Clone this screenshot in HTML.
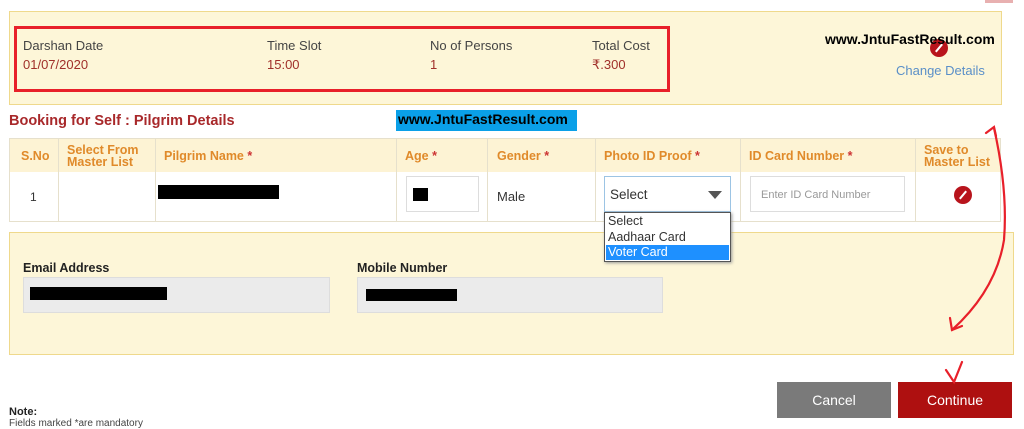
<!DOCTYPE html><html><head><style>
body{margin:0;width:1024px;height:422px;overflow:hidden;background:#fff;font-family:"Liberation Sans",sans-serif;position:relative}
div,span{position:absolute;box-sizing:border-box}
.lb{font-size:13px;color:#444}
.vl{font-size:13px;color:#a0302a}
.th{font-size:12.5px;color:#e08a2a;font-weight:bold;line-height:12px}
.th b{color:#c33}
.col{top:138px;height:84px;border-left:1px solid #e6e0cc}
.edit{width:18px;height:18px;border-radius:50%;background:#b8141c}
.edit:after{content:"";position:absolute;left:8px;top:4px;width:2px;height:10px;background:#fff;transform:rotate(40deg)}
</style></head><body>
<div style="left:985px;top:0;width:28px;height:3px;background:#e8b0b0"></div>
<div style="left:9px;top:11px;width:993px;height:94px;background:#fdf6d8;border:1px solid #efd98c"></div>
<div style="left:14px;top:26px;width:656px;height:66px;border:3px solid #e8202a"></div>
<div class="lb" style="left:23px;top:38px">Darshan Date</div><div class="vl" style="left:23px;top:57px">01/07/2020</div>
<div class="lb" style="left:267px;top:38px">Time Slot</div><div class="vl" style="left:267px;top:57px">15:00</div>
<div class="lb" style="left:430px;top:38px">No of Persons</div><div class="vl" style="left:430px;top:57px">1</div>
<div class="lb" style="left:592px;top:38px">Total Cost</div><div class="vl" style="left:592px;top:57px">₹.300</div>
<div class="edit" style="left:930px;top:39px"></div>
<div style="left:825px;top:31px;font-size:14px;font-weight:bold;color:#000">www.JntuFastResult.com</div>
<div style="left:896px;top:63px;font-size:13px;color:#5a8fc8">Change Details</div>
<div style="left:9px;top:113px;font-size:14.5px;font-weight:bold;color:#a8282a">Booking for Self : Pilgrim Details</div>
<div style="left:396px;top:110px;width:181px;height:21px;background:#0aa0e8;font-size:14px;font-weight:bold;padding:1px 0 0 2px">www.JntuFastResult.com</div>
<div style="left:9px;top:138px;width:992px;height:84px;border:1px solid #e6e0cc"></div>
<div style="left:10px;top:139px;width:990px;height:33px;background:#fdf3d4"></div>
<div class="col" style="left:58px"></div><div class="col" style="left:155px"></div><div class="col" style="left:396px"></div><div class="col" style="left:487px"></div><div class="col" style="left:595px"></div><div class="col" style="left:740px"></div><div class="col" style="left:915px"></div>
<div class="th" style="left:21px;top:150px">S.No</div>
<div class="th" style="left:67px;top:144px">Select From<br>Master List</div>
<div class="th" style="left:164px;top:150px">Pilgrim Name <b>*</b></div>
<div class="th" style="left:405px;top:150px">Age <b>*</b></div>
<div class="th" style="left:497px;top:150px">Gender <b>*</b></div>
<div class="th" style="left:604px;top:150px">Photo ID Proof <b>*</b></div>
<div class="th" style="left:749px;top:150px">ID Card Number <b>*</b></div>
<div class="th" style="left:924px;top:144px">Save to<br>Master List</div>
<div style="left:30px;top:190px;font-size:12px;color:#333">1</div>
<div style="left:158px;top:185px;width:121px;height:14px;background:#000"></div>
<div style="left:406px;top:176px;width:73px;height:36px;border:1px solid #ddd;background:#fff"></div>
<div style="left:413px;top:188px;width:15px;height:13px;background:#000"></div>
<div style="left:497px;top:189px;font-size:13px;color:#333">Male</div>
<div style="left:604px;top:176px;width:127px;height:36px;border:1px solid #9cc4e4;background:#fff;font-size:13.5px;color:#333;padding:10px 0 0 5px">Select<span style="right:8px;top:14px;border:7px solid transparent;border-top:8px solid #555;border-bottom:0"></span></div>
<div style="left:750px;top:176px;width:155px;height:36px;border:1px solid #ddd;background:#fff;font-size:11px;color:#999;padding:12px 0 0 10px">Enter ID Card Number</div>
<div class="edit" style="left:954px;top:186px"></div>
<div style="left:9px;top:232px;width:1005px;height:123px;background:#fdf6d8;border:1px solid #efd98c"></div>
<div style="left:604px;top:212px;width:127px;height:50px;background:#fff;border:1px solid #555;font-size:12.5px;color:#333;line-height:16px;box-shadow:1px 1px 3px #999">
<div style="left:3px;top:0">Select</div><div style="left:3px;top:16px">Aadhaar Card</div><div style="left:1px;top:32px;width:123px;height:15px;background:#1e90ff;color:#fff;padding-left:2px;line-height:15px">Voter Card</div></div>
<div style="left:23px;top:261px;font-size:12.5px;font-weight:bold;color:#222">Email Address</div>
<div style="left:357px;top:261px;font-size:12.5px;font-weight:bold;color:#222">Mobile Number</div>
<div style="left:23px;top:277px;width:307px;height:36px;background:#ebebeb;border:1px solid #ddd"></div>
<div style="left:30px;top:287px;width:137px;height:13px;background:#000"></div>
<div style="left:357px;top:277px;width:306px;height:36px;background:#ebebeb;border:1px solid #ddd"></div>
<div style="left:366px;top:289px;width:91px;height:12px;background:#000"></div>
<div style="left:777px;top:382px;width:114px;height:36px;background:#7a7a7a;color:#fff;font-size:14px;text-align:center;line-height:36px">Cancel</div>
<div style="left:898px;top:382px;width:114px;height:36px;background:#ae1010;color:#fff;font-size:14px;text-align:center;line-height:36px">Continue</div>
<div style="left:9px;top:406px;font-size:11px;font-weight:bold;color:#222">Note:</div>
<div style="left:9px;top:418px;font-size:10px;color:#444">Fields marked *are mandatory</div>
<svg style="position:absolute;left:0;top:0" width="1024" height="422"><g fill="none" stroke="#e8202a" stroke-width="2.2" stroke-linecap="round">
<path d="M994 128 Q1008 190 1004 240 Q996 290 952 330"/><path d="M986 133 L994 127 L996 136"/><path d="M950 318 L952 330 L962 326"/>
<path d="M946 370 L954 382 L962 362"/></g></svg>
</body></html>
